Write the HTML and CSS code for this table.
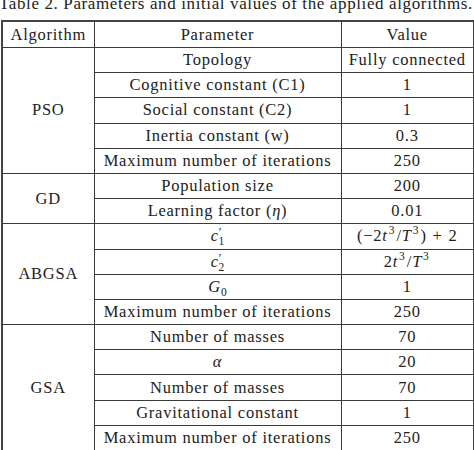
FILE: index.html
```html
<!DOCTYPE html>
<html>
<head>
<meta charset="utf-8">
<link rel="stylesheet" href="styles.css">
</head>
<body>
<div class="caption">Table 2. Parameters and initial values of the applied algorithms.</div>
<table class="params">
  <colgroup><col class="c1"><col class="c2"><col class="c3"></colgroup>
  <tr class="head"><th>Algorithm</th><th>Parameter</th><th>Value</th></tr>
  <tr><td rowspan="5">PSO</td><td>Topology</td><td>Fully connected</td></tr>
  <tr><td>Cognitive constant (C1)</td><td>1</td></tr>
  <tr><td>Social constant (C2)</td><td>1</td></tr>
  <tr><td>Inertia constant (w)</td><td>0.3</td></tr>
  <tr><td>Maximum number of iterations</td><td>250</td></tr>
  <tr><td rowspan="2">GD</td><td>Population size</td><td>200</td></tr>
  <tr><td>Learning factor (<i>η</i>)</td><td>0.01</td></tr>
  <tr><td rowspan="4">ABGSA</td><td><i>c</i><sup class="prime">′</sup><sub class="under">1</sub></td><td class="math">(−2<i>t</i><sup>3</sup>/<i>T</i><sup>3</sup>) + 2</td></tr>
  <tr><td><i>c</i><sup class="prime">′</sup><sub class="under">2</sub></td><td class="math">2<i>t</i><sup>3</sup>/<i>T</i><sup>3</sup></td></tr>
  <tr><td><i>G</i><sub>0</sub></td><td>1</td></tr>
  <tr><td>Maximum number of iterations</td><td>250</td></tr>
  <tr><td rowspan="5">GSA</td><td>Number of masses</td><td>70</td></tr>
  <tr><td><i>α</i></td><td>20</td></tr>
  <tr><td>Number of masses</td><td>70</td></tr>
  <tr><td>Gravitational constant</td><td>1</td></tr>
  <tr><td>Maximum number of iterations</td><td>250</td></tr>
</table>
</body>
</html>
```
FILE: styles.css
```css
html, body {
  margin: 0;
  padding: 0;
  background: #fff;
}
body {
  width: 474px;
  height: 450px;
  overflow: hidden;
  font-family: "Liberation Serif", "DejaVu Serif", serif;
  color: #222;
}
.caption {
  font-size: 17px;
  line-height: 20px;
  margin-top: -6px;
  margin-left: -1px;
  height: 26px;
  white-space: nowrap;
  letter-spacing: 0.62px;
}
.params {
  border-collapse: collapse;
  margin-left: 1px;
  width: 472px;
  table-layout: fixed;
  font-size: 16.5px;
  letter-spacing: 0.75px;
  border: 2px solid #444;
}
.c1 { width: 92px; }
.c2 { width: 247px; }
.c3 { width: 133px; }
.params th, .params td {
  border: 1px solid #3a3a3a;
  text-align: center;
  vertical-align: middle;
  font-weight: normal;
  padding: 0;
  height: 24.2px;
  line-height: 20px;
  white-space: nowrap;
}
.params tr.head th { height: 25px; }
sup { font-size: 11.5px; line-height: 0; vertical-align: 7px; letter-spacing: 0; }
sub { font-size: 11.5px; line-height: 0; vertical-align: -4px; letter-spacing: 0; }
.math sup { margin: 0 2px 0 1px; }
.math { word-spacing: 1px; }
.prime { font-size: 13px; vertical-align: 5px; }
.under { margin-left: -3px; }
```
